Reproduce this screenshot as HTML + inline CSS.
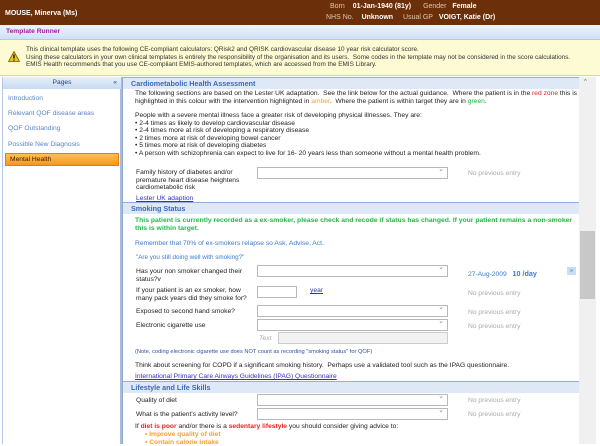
<!DOCTYPE html>
<html><head><meta charset="utf-8"><style>
*{margin:0;padding:0;box-sizing:border-box}
body{width:600px;height:444px;overflow:hidden;background:#fff;font-family:"Liberation Sans",sans-serif;font-size:6.7px;color:#222;position:relative}
.a{position:absolute;white-space:nowrap}
.hdr{left:0;top:0;width:600px;height:25px;background:#6b2f0a;color:#fff;font-size:7px}
.tr{left:0;top:25px;width:600px;height:15px;background:linear-gradient(#eef5fd,#cfe0f6);border-bottom:1px solid #b8c9e0}
.warn{left:0;top:40px;width:600px;height:36px;background:#fdfbd3;border-bottom:1px solid #d8d4a0}
.left{left:2px;top:77px;width:120px;height:367px;border-left:1px solid #b4c8e4;border-right:2px solid #a8bcd8;background:#fff}
.pg{left:3px;top:77px;width:118px;height:12px;background:linear-gradient(#e7f0fb,#c7daf2);text-align:center;color:#1e3f7a;line-height:12px}
.nav{left:8px;color:#5a82c8}
.mh{left:5px;top:153px;width:114px;height:13px;background:linear-gradient(#ffc05a,#f6961c);border:1px solid #e08010;color:#3a2000;padding-left:4px;line-height:11px}
.sec{left:123px;width:457px;height:12px;background:#dfe8f7;border-top:1px solid #8fb0e0;color:#3a6ab8;font-weight:bold;font-size:7.2px;padding-left:8px;line-height:11px}
.dd{position:absolute;left:257px;width:191px;height:12px;border:1px solid #b8b8b8;background:#fff}
.dd:after{content:"⌄";position:absolute;right:3px;top:-3px;font-size:7px;color:#888}
.np{left:468px;color:#aaa}
.bl{color:#3c7ad0}
.g{color:#1fb84a;font-weight:bold;font-size:6.8px}
</style></head><body>
<div class="a hdr">
 <div class="a" style="left:5px;top:10px;font-weight:bold">MOUSE, Minerva (Ms)</div>
 <div class="a" style="left:330px;top:3px;color:#e0c8b0">Born <b style="color:#fff;margin-left:6px">01-Jan-1940 (81y)</b> <span style="margin-left:10px">Gender</span> <b style="color:#fff;margin-left:4px">Female</b></div>
 <div class="a" style="left:326px;top:14px;color:#e0c8b0">NHS No. <b style="color:#fff;margin-left:6px">Unknown</b> <span style="margin-left:8px">Usual GP</span> <b style="color:#fff;margin-left:4px">VOIGT, Katie (Dr)</b></div>
</div>
<div class="a tr"><div class="a" style="left:6px;top:3px;color:#a0209a;font-weight:bold">Template Runner</div></div>
<div class="a warn">
 <svg class="a" style="left:8px;top:11px" width="12" height="11" viewBox="0 0 12 11"><path d="M6 0.5L11.5 10.5H0.5Z" fill="#f2c21a" stroke="#7a5a00" stroke-width=".8"/><path d="M6 3.5v4M6 8.6v1" stroke="#000" stroke-width="1.3"/></svg>
 <div class="a" style="left:26px;top:6px;font-size:6.4px;line-height:7.5px;color:#333">This clinical template uses the following CE-compliant calculators: QRisk2 and QRISK cardiovascular disease 10 year risk calculator score.<br>Using these calculators in your own clinical templates is entirely the responsibility of the organisation and its users.&nbsp; Some codes in the template may not be considered in the score calculations.<br>EMIS Health recommends that you use CE-compliant EMIS-authored templates, which are accessed from the EMIS Library.</div>
</div>
<div class="a left"></div>
<div class="a pg">Pages<span style="position:absolute;right:4px">«</span></div>
<div class="a nav" style="top:95px">Introduction</div>
<div class="a nav" style="top:110px">Relevant QOF disease areas</div>
<div class="a nav" style="top:125px">QOF Outstanding</div>
<div class="a nav" style="top:141px">Possible New Diagnosis</div>
<div class="a mh">Mental Health</div>
<div class="a" style="left:122px;top:77px;width:1px;height:367px;background:#8fa8cc"></div>

<div class="a sec" style="top:77px">Cardiometabolic Health Assessment</div>
<div class="a" style="left:135px;top:90px;line-height:7.5px">The following sections are based on the Lester UK adaptation.&nbsp; See the link below for the actual guidance.&nbsp; Where the patient is in the <span style="color:#f02020">red zone</span> this is<br>highlighted in this colour with the intervention highlighted in <span style="color:#f5a030">amber</span>.&nbsp; Where the patient is within target they are in <span style="color:#20b840">green</span>.</div>
<div class="a" style="left:135px;top:112px;line-height:7.5px">People with a severe mental illness face a greater risk of developing physical illnesses. They are:<br>• 2-4 times as likely to develop cardiovascular disease<br>• 2-4 times more at risk of developing a respiratory disease<br>• 2 times more at risk of developing bowel cancer<br>• 5 times more at risk of developing diabetes<br>• A person with schizophrenia can expect to live for 16- 20 years less than someone without a mental health problem.</div>
<div class="a" style="left:136px;top:169px;line-height:7.5px">Family history of diabetes and/or<br>premature heart disease heightens<br>cardiometabolic risk</div>
<div class="dd" style="top:167px"></div>
<div class="a np" style="top:170px">No previous entry</div>
<div class="a" style="left:136px;top:195px;color:#3030d0;text-decoration:underline">Lester UK adaption</div>

<div class="a sec" style="top:202px">Smoking Status</div>
<div class="a g" style="left:135px;top:217px;line-height:7.5px">This patient is currently recorded as a ex-smoker, please check and recode if status has changed. If your patient remains a non-smoker<br>this is within target.</div>
<div class="a bl" style="left:135px;top:240px">Remember that 70% of ex-smokers relapse so Ask, Advise, Act.</div>
<div class="a bl" style="left:136px;top:254px;font-size:6.3px">"Are you still doing well with smoking?"</div>
<div class="a" style="left:136px;top:268px;line-height:7.5px">Has your non smoker changed their<br>status?v</div>
<div class="dd" style="top:265px"></div>
<div class="a bl" style="left:468px;top:269px">27-Aug-2009 <b style="margin-left:4px;font-size:7.2px">10 /day</b></div>
<div class="a" style="left:567px;top:267px;width:9px;height:8px;background:#c8dcf6;color:#2050a0;font-size:5px;text-align:center;line-height:8px">»</div>
<div class="a" style="left:136px;top:287px;line-height:7.5px">If your patient is an ex smoker, how<br>many pack years did they smoke for?</div>
<div class="a" style="left:257px;top:286px;width:40px;height:12px;border:1px solid #b8b8b8"></div>
<div class="a" style="left:310px;top:287px;color:#3030d0;text-decoration:underline">year</div>
<div class="a np" style="top:290px">No previous entry</div>
<div class="a" style="left:136px;top:308px">Exposed to second hand smoke?</div>
<div class="dd" style="top:305px"></div>
<div class="a np" style="top:309px">No previous entry</div>
<div class="a" style="left:136px;top:322px">Electronic cigarette use</div>
<div class="dd" style="top:319px"></div>
<div class="a np" style="top:323px">No previous entry</div>
<div class="a" style="left:259px;top:335px;color:#aaa;font-style:italic">Text</div>
<div class="a" style="left:278px;top:332px;width:170px;height:12px;border:1px solid #ccc;background:#f2f2f2"></div>
<div class="a" style="left:135px;top:349px;color:#3050a0;font-size:5.7px">(Note, coding electronic cigarette use does NOT count as recording "smoking status" for QOF)</div>
<div class="a" style="left:135px;top:362px">Think about screening for COPD if a significant smoking history.&nbsp; Perhaps use a validated tool such as the IPAG questionnaire.</div>
<div class="a" style="left:135px;top:373px;color:#3030d0;text-decoration:underline">International Primary Care Airways Guidelines (IPAG) Questionnaire</div>

<div class="a sec" style="top:381px">Lifestyle and Life Skills</div>
<div class="a" style="left:136px;top:397px">Quality of diet</div>
<div class="dd" style="top:394px"></div>
<div class="a np" style="top:397px">No previous entry</div>
<div class="a" style="left:136px;top:411px">What is the patient's activity level?</div>
<div class="dd" style="top:408px"></div>
<div class="a np" style="top:411px">No previous entry</div>
<div class="a" style="left:135px;top:423px">If <b style="color:#f02020">diet is poor</b> and/or there is a <b style="color:#f02020">sedentary lifestyle</b> you should consider giving advice to:</div>
<div class="a" style="left:145px;top:431px;color:#f5a030;font-weight:bold;line-height:7.5px">• Improve quality of diet<br>• Contain calorie intake</div>

<div class="a" style="left:579px;top:77px;width:17px;height:367px;background:#f0f0f0"></div>
<div class="a" style="left:584px;top:79px;color:#666;font-size:6px">^</div>
<div class="a" style="left:580px;top:231px;width:15px;height:68px;background:#c8c8c8"></div>
</body></html>
